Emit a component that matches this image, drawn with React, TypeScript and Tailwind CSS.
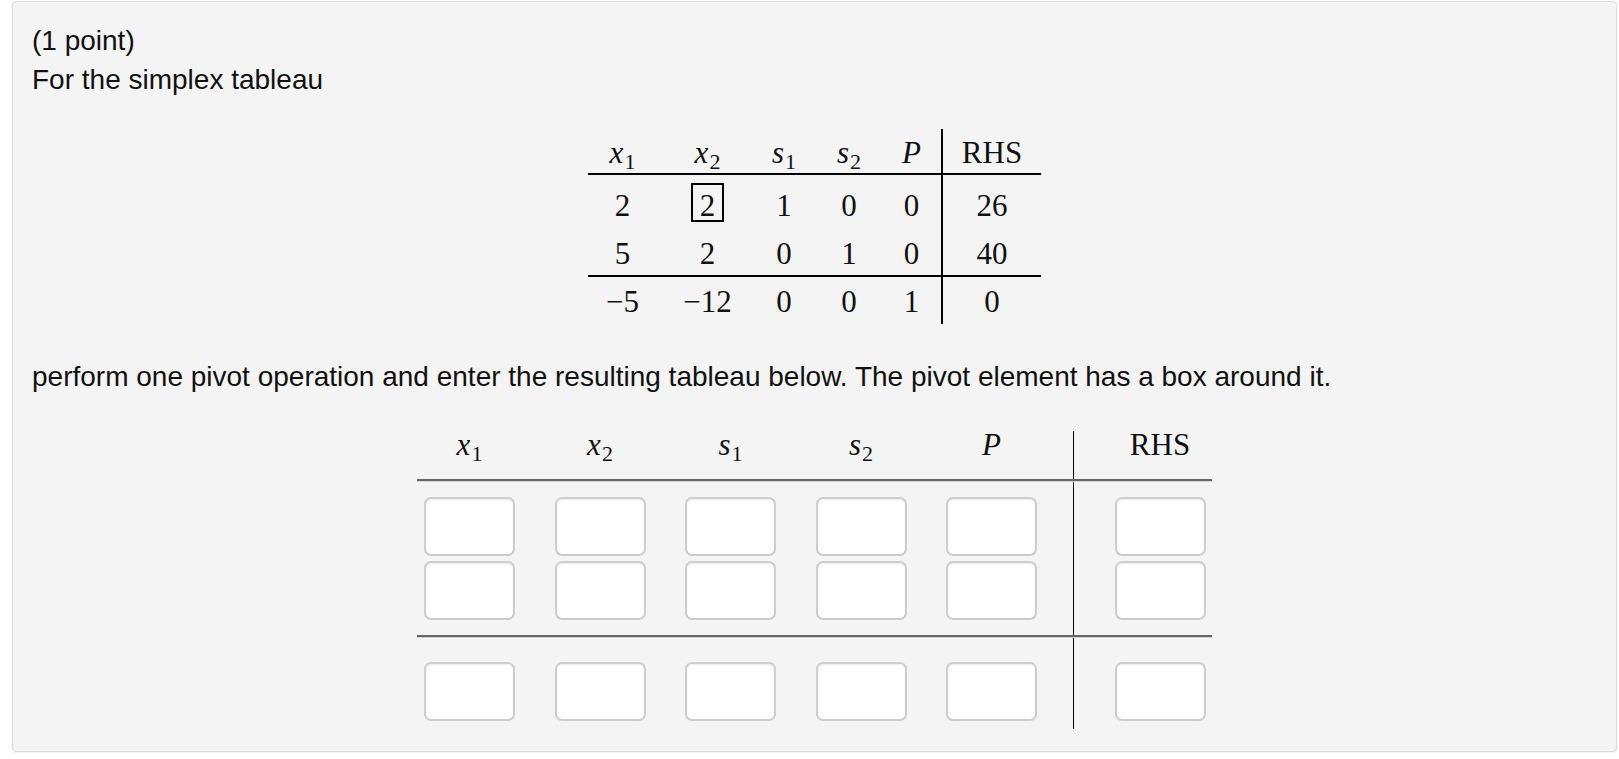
import React from 'react';

const serif = { fontFamily: '"Liberation Serif", "DejaVu Serif", serif' };

const Var: React.FC<{ v: string; sub?: string }> = ({ v, sub }) => (
  <span className="whitespace-nowrap">
    <i>{v}</i>
    {sub && <span className="not-italic text-[22px] align-[-6px] ml-[1px]">{sub}</span>}
  </span>
);

const Head: React.FC<{ v: string; sub?: string }> = ({ v, sub }) =>
  v === 'RHS' ? <span>RHS</span> : <Var v={v} sub={sub} />;

const heads = [
  { v: 'x', sub: '1' },
  { v: 'x', sub: '2' },
  { v: 's', sub: '1' },
  { v: 's', sub: '2' },
  { v: 'P' },
];

// column widths of the given tableau, picked so centres line up with the picture
const colW = ['w-[69px]', 'w-[101px]', 'w-[52px]', 'w-[78px]', 'w-[50px] pr-[3px]'];

const rows = [
  ['2', '2', '1', '0', '0', '26'],
  ['5', '2', '0', '1', '0', '40'],
  ['\u22125', '\u221212', '0', '0', '1', '0'],
];

const GivenTableau: React.FC = () => (
  <div className="flex justify-center mt-[30px]">
    <div className="w-[453px] text-[31px] text-[#111]" style={serif}>
      {/* header */}
      <div className="flex h-[44px] leading-[47px]">
        {heads.map((h, i) => (
          <div key={i} className={`${colW[i]} text-center`}>
            <Head v={h.v} sub={h.sub} />
          </div>
        ))}
        <div className="ml-[3px] border-l-2 border-black flex-1 text-center">RHS</div>
      </div>
      <div className="h-[2px] bg-black" />
      {/* row 1, pivot boxed */}
      <div className="flex h-[60px] leading-[62px]">
        {rows[0].slice(0, 5).map((c, i) => (
          <div key={i} className={`${colW[i]} text-center`}>
            {i === 1 ? (
              <div className="flex justify-center pt-[8px]">
                <span className="w-[33px] h-[39px] border-2 border-black leading-[37px] pt-[2px] text-center">{c}</span>
              </div>
            ) : (
              c
            )}
          </div>
        ))}
        <div className="ml-[3px] border-l-2 border-black flex-1 text-center">{rows[0][5]}</div>
      </div>
      {/* row 2 */}
      <div className="flex h-[40px] leading-[37px]">
        {rows[1].slice(0, 5).map((c, i) => (
          <div key={i} className={`${colW[i]} text-center`}>{c}</div>
        ))}
        <div className="ml-[3px] border-l-2 border-black flex-1 text-center">{rows[1][5]}</div>
      </div>
      <div className="h-[2px] bg-black" />
      {/* objective row */}
      <div className="flex h-[47px] leading-[50px]">
        {rows[2].slice(0, 5).map((c, i) => (
          <div key={i} className={`${colW[i]} text-center`}>{c}</div>
        ))}
        <div className="ml-[3px] border-l-2 border-black flex-1 text-center">{rows[2][5]}</div>
      </div>
    </div>
  </div>
);

const Cell: React.FC = () => (
  <input
    type="text"
    className="w-[91px] h-[59px] bg-white border-2 border-[#cdcdcd] rounded-[7px] shadow-[inset_0_1px_2px_rgba(0,0,0,0.08)] outline-none"
  />
);

const Rule: React.FC = () => (
  <div>
    <div className="h-[2px] bg-[#666]" />
    <div className="h-[1px] bg-[#d2d2d2]" />
  </div>
);

const InputRow: React.FC<{ className?: string }> = ({ className }) => (
  <div className="flex">
    <div className={`flex gap-[39.5px] pl-[7px] pr-[35.5px] ${className}`}>
      {[0, 1, 2, 3, 4].map((i) => (
        <Cell key={i} />
      ))}
    </div>
    <div className={`border-l-[1.5px] border-black pl-[41px] pr-[6px] ${className}`}>
      <Cell />
    </div>
  </div>
);

const AnswerTableau: React.FC = () => (
  <div className="flex justify-center mt-[34px]">
    <div className="w-[795px] text-[31px] text-[#111]" style={serif}>
      <div className="flex h-[48px] leading-[27px]">
        <div className="flex gap-[39.5px] pl-[7px] pr-[35.5px]">
          {heads.map((h, i) => (
            <div key={i} className="w-[91px] text-center">
              <Head v={h.v} sub={h.sub} />
            </div>
          ))}
        </div>
        <div className="border-l-[1.5px] border-black pl-[41px] pr-[6px]">
          <div className="w-[91px] text-center">RHS</div>
        </div>
      </div>
      <Rule />
      <div className="flex">
        <div className="flex flex-col gap-[5px] pt-[15px] pb-[15px] pl-[7px] pr-[35.5px]">
          {[0, 1].map((r) => (
            <div key={r} className="flex gap-[39.5px]">
              {[0, 1, 2, 3, 4].map((i) => (
                <Cell key={i} />
              ))}
            </div>
          ))}
        </div>
        <div className="flex flex-col gap-[5px] pt-[15px] pb-[15px] border-l-[1.5px] border-black pl-[41px] pr-[6px]">
          <Cell />
          <Cell />
        </div>
      </div>
      <Rule />
      <InputRow className="pt-[24px] pb-[8px]" />
    </div>
  </div>
);

export default function App() {
  return (
    <div className="bg-white w-[1619px] h-[759px] pl-[12px] pt-[1px]">
      <div
        className="w-[1605px] h-[751px] bg-[#f4f4f4] border border-[#dcdcdc] rounded-[4px] shadow-[0_1px_1px_rgba(0,0,0,0.05)] pt-[19px] text-[#111]"
        style={{ fontFamily: '"Liberation Sans", Arial, sans-serif' }}
      >
        <div className="pl-[19px] text-[28px] leading-[1.4]">
          <div>(1 point)</div>
          <div>For the simplex tableau</div>
        </div>
        <GivenTableau />
        <div className="pl-[19px] text-[28px] leading-[1.4] mt-[33px]">
          perform one pivot operation and enter the resulting tableau below. The pivot element has a box around it.
        </div>
        <AnswerTableau />
      </div>
    </div>
  );
}
